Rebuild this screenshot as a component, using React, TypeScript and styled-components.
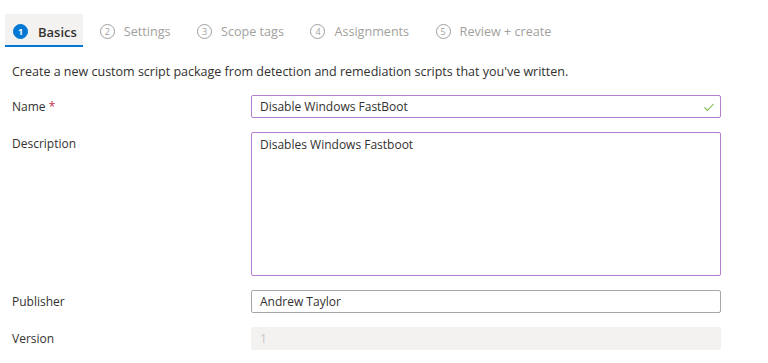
import styled, { createGlobalStyle } from 'styled-components';

const GlobalStyle = createGlobalStyle`
  body {
    margin: 0;
    background: #ffffff;
    font-family: "Open Sans", "Noto Sans", sans-serif;
    font-size: 12px;
    color: #323130;
  }
`;

const steps = ['Basics', 'Settings', 'Scope tags', 'Assignments', 'Review + create'];

export default function App() {
  return (
    <Page>
      <GlobalStyle />
      <TabBar>
        {steps.map((step, i) => (
          <Tab key={step} active={i === 0}>
            <StepCircle active={i === 0}>{i + 1}</StepCircle>
            <TabLabel active={i === 0}>{step}</TabLabel>
          </Tab>
        ))}
      </TabBar>
      <Intro>Create a new custom script package from detection and remediation scripts that you've written.</Intro>
      <Form>
        <Label>
          Name <Required>*</Required>
        </Label>
        <Field variant="focus">
          <FieldText>Disable Windows FastBoot</FieldText>
          <Check viewBox="0 0 12 12">
            <path d="M1.5 6.5 L4.5 9.5 L10.5 3" fill="none" stroke="#7ab648" strokeWidth="1.1" />
          </Check>
        </Field>
        <Label>Description</Label>
        <TextArea>Disables Windows Fastboot</TextArea>
        <Label>Publisher</Label>
        <Field variant="normal">
          <FieldText>Andrew Taylor</FieldText>
        </Field>
        <Label>Version</Label>
        <Field variant="disabled">
          <FieldText>1</FieldText>
        </Field>
      </Form>
    </Page>
  );
}

const Page = styled.div`
  padding: 14px 0 0 0;
  width: 768px;
  height: 363px;
  box-sizing: border-box;
  overflow: hidden;
`;

const TabBar = styled.div`
  display: flex;
  align-items: stretch;
  padding-left: 5px;
  height: 33px;
`;

const Tab = styled.div<{ active?: boolean }>`
  display: flex;
  align-items: center;
  gap: ${(p) => (p.active ? '10px' : '9px')};
  padding: 4px 6px 0 8px;
  margin-right: ${(p) => (p.active ? '9px' : '12.5px')};
  background: ${(p) => (p.active ? '#f3f2f1' : 'transparent')};
  border-bottom: 2px solid ${(p) => (p.active ? '#0078d4' : 'transparent')};
  box-sizing: border-box;
`;

const StepCircle = styled.span<{ active?: boolean }>`
  width: 15px;
  height: 15px;
  border-radius: 50%;
  box-sizing: border-box;
  display: flex;
  align-items: center;
  justify-content: center;
  font-size: 9px;
  font-weight: ${(p) => (p.active ? 700 : 400)};
  background: ${(p) => (p.active ? '#0078d4' : 'transparent')};
  color: ${(p) => (p.active ? '#ffffff' : '#a19f9d')};
  border: 1px solid ${(p) => (p.active ? '#0078d4' : '#a19f9d')};
`;

const TabLabel = styled.span<{ active?: boolean }>`
  font-size: ${(p) => (p.active ? '13px' : '12.6px')};
  font-weight: ${(p) => (p.active ? 600 : 400)};
  color: ${(p) => (p.active ? '#323130' : '#a19f9d')};
`;

const Intro = styled.div`
  margin: 17px 0 0 12px;
  font-size: 12.5px;
  line-height: 16px;
  color: #323130;
`;

const Form = styled.div`
  display: grid;
  grid-template-columns: 239px 470px;
  row-gap: 14px;
  margin: 15px 0 0 12px;
`;

const Label = styled.div`
  padding-top: 4px;
  line-height: 16px;
  color: #323130;
`;

const Required = styled.span`
  color: #c4314b;
`;

const Field = styled.div<{ variant: 'focus' | 'normal' | 'disabled' }>`
  height: 23px;
  box-sizing: border-box;
  display: flex;
  align-items: center;
  padding: 0 8px;
  border: 1px solid
    ${(p) => (p.variant === 'focus' ? '#b47fcf' : p.variant === 'normal' ? '#a6a6a6' : '#f3f2f1')};
  border-radius: 2px;
  background: ${(p) => (p.variant === 'disabled' ? '#f3f2f1' : '#ffffff')};
  color: ${(p) => (p.variant === 'disabled' ? '#c8c6c4' : '#323130')};
`;

const FieldText = styled.span`
  flex: 1;
  line-height: 16px;
`;

const Check = styled.svg`
  width: 12px;
  height: 12px;
  margin-right: -3px;
`;

const TextArea = styled.div`
  height: 144px;
  box-sizing: border-box;
  padding: 4px 8px;
  line-height: 16px;
  border: 1px solid #b47fcf;
  border-radius: 2px;
  color: #323130;
`;
